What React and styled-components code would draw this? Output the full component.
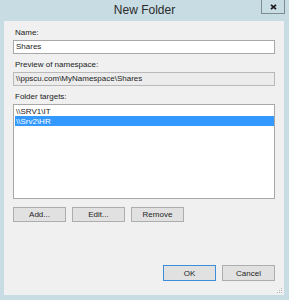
import React from 'react';
import styled, { createGlobalStyle } from 'styled-components';

const GlobalStyle = createGlobalStyle`
  html, body {
    margin: 0;
    padding: 0;
    background: #c8dce3;
  }
`;

const Window = styled.div`
  width: 289px;
  height: 300px;
  box-sizing: border-box;
  padding: 0 5px 5px 4px;
  background: #c8dce3;
  display: flex;
  flex-direction: column;
  position: relative;
  font-family: "Liberation Sans", Arial, sans-serif;
`;

const TitleBar = styled.div`
  height: 21px;
  display: flex;
  align-items: center;
  justify-content: center;
  font-size: 12px;
  color: #2b2b2b;
  padding-left: 1px;
  padding-bottom: 1px;
  box-sizing: border-box;
`;

const CloseButton = styled.div`
  position: absolute;
  top: 0;
  right: 4px;
  width: 24px;
  height: 14px;
  box-sizing: border-box;
  border: 1px solid #7f8c91;
  border-top: none;
  background: #c8dce3;
  display: flex;
  align-items: center;
  justify-content: center;
`;

const Client = styled.div`
  flex: 1;
  background: #f0f0f0;
  padding: 7px 9px 14px 9px;
  display: flex;
  flex-direction: column;
  box-sizing: border-box;
  position: relative;
`;

const Label = styled.div`
  font-size: 8px;
  line-height: 10px;
  height: 10px;
  color: #222;
  margin-top: ${p => p.$top || 0}px;
  margin-bottom: 2px;
  padding-left: 2px;
`;

const Field = styled.div`
  height: 14px;
  box-sizing: border-box;
  border: 1px solid ${p => (p.$readOnly ? '#b9b9b9' : '#a8a8a8')};
  background: ${p => (p.$readOnly ? '#ececec' : '#ffffff')};
  font-size: 8px;
  line-height: 12px;
  padding-left: 2px;
  color: #1e1e1e;
  white-space: nowrap;
`;

const ListBox = styled.div`
  height: 95px;
  box-sizing: border-box;
  border: 1px solid #a8a8a8;
  background: #fff;
  padding: 1px 0 0 1px;
`;

const ListItem = styled.div`
  height: 9px;
  font-size: 8px;
  line-height: 9px;
  padding-left: 1px;
  padding-top: 1px;
  color: ${p => (p.$selected ? '#fff' : '#1e1e1e')};
  background: ${p => (p.$selected ? '#3399ff' : 'transparent')};
`;

const ButtonRow = styled.div`
  display: flex;
  gap: 6px;
  margin-top: ${p => p.$top || 0}px;
  justify-content: ${p => (p.$end ? 'flex-end' : 'flex-start')};
`;

const Spacer = styled.div`
  flex: 1;
`;

const Button = styled.div`
  width: 53px;
  height: ${p => p.$h || 15}px;
  box-sizing: border-box;
  border: 1px solid ${p => (p.$default ? '#3d8ed8' : '#adadad')};
  background: #e1e1e1;
  font-size: 8px;
  color: #1e1e1e;
  display: flex;
  align-items: center;
  justify-content: center;
`;

const Grip = styled.svg`
  position: absolute;
  right: 1px;
  bottom: 1px;
`;

export default function App() {
  return (
    <>
      <GlobalStyle />
      <Window>
        <TitleBar>New Folder</TitleBar>
        <CloseButton>
          <svg width="7" height="6" viewBox="0 0 7 6">
            <path d="M1 0.8 L6 5.2 M6 0.8 L1 5.2" stroke="#1a1a1a" strokeWidth="1.7" />
          </svg>
        </CloseButton>
        <Client>
          <Label>Name:</Label>
          <Field>Shares</Field>
          <Label $top={6}>Preview of namespace:</Label>
          <Field $readOnly>\\ppscu.com\MyNamespace\Shares</Field>
          <Label $top={6}>Folder targets:</Label>
          <ListBox>
            <ListItem>\\SRV1\IT</ListItem>
            <ListItem $selected>\\Srv2\HR</ListItem>
          </ListBox>
          <ButtonRow $top={8}>
            <Button>Add...</Button>
            <Button>Edit...</Button>
            <Button>Remove</Button>
          </ButtonRow>
          <Spacer />
          <ButtonRow $end>
            <Button $default $h={16}>OK</Button>
            <Button $h={16}>Cancel</Button>
          </ButtonRow>
          <Grip width="6" height="6" viewBox="0 0 6 6">
            <rect x="4" y="0" width="1" height="1" fill="#b5b5b5" />
            <rect x="2" y="2" width="1" height="1" fill="#b5b5b5" />
            <rect x="4" y="2" width="1" height="1" fill="#b5b5b5" />
            <rect x="0" y="4" width="1" height="1" fill="#b5b5b5" />
            <rect x="2" y="4" width="1" height="1" fill="#b5b5b5" />
            <rect x="4" y="4" width="1" height="1" fill="#b5b5b5" />
          </Grip>
        </Client>
      </Window>
    </>
  );
}
